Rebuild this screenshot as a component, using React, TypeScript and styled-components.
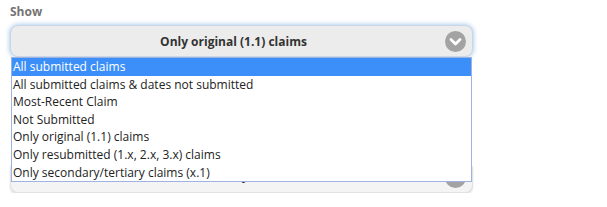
import React from "react";
import styled, { createGlobalStyle } from "styled-components";

const GlobalStyle = createGlobalStyle`
    html, body {
        margin: 0;
        padding: 0;
        background: #ffffff;
        font-family: "Open Sans", "Liberation Sans", sans-serif;
    }
`;

const options = [
    "All submitted claims",
    "All submitted claims & dates not submitted",
    "Most-Recent Claim",
    "Not Submitted",
    "Only original (1.1) claims",
    "Only resubmitted (1.x, 2.x, 3.x) claims",
    "Only secondary/tertiary claims (x.1)",
];

function Chevron() {
    return (
        <svg width="21" height="21" viewBox="0 0 21 21">
            <circle cx="10.5" cy="10.5" r="10.5" fill="#a3a3a3" />
            <path d="M6 8.6 L10.5 13 L15 8.6" fill="none" stroke="#ffffff" strokeWidth="2.8" strokeLinecap="round" strokeLinejoin="round" />
        </svg>
    );
}

export default function App() {
    return (
        <>
            <GlobalStyle />
            <Page>
                <Form>
                    <Field>
                        <Label>Show</Label>
                        <SelectWrap>
                            <SelectButton $focused>
                                <SelectText>Only original (1.1) claims</SelectText>
                                <Icon>
                                    <Chevron />
                                </Icon>
                            </SelectButton>
                            <Listbox>
                                {options.map((o, i) => (
                                    <Option key={o} $active={i === 0}>
                                        {o}
                                    </Option>
                                ))}
                            </Listbox>
                        </SelectWrap>
                    </Field>
                    <Field $spaced>
                        <SelectWrap>
                            <SelectButton>
                                <SelectText $raised>Daily</SelectText>
                                <Icon>
                                    <Chevron />
                                </Icon>
                            </SelectButton>
                        </SelectWrap>
                    </Field>
                </Form>
            </Page>
        </>
    );
}

const Page = styled.div`
    padding: 4px 0 0 10px;
`;

const Form = styled.div`
    width: 463px;
    display: flex;
    flex-direction: column;
`;

const Field = styled.div<{ $spaced?: boolean }>`
    display: flex;
    flex-direction: column;
    margin-top: ${(p) => (p.$spaced ? "104px" : "0")};
`;

const Label = styled.label`
    font-size: 12px;
    line-height: 16px;
    font-weight: 700;
    color: #747474;
    margin-bottom: 5px;
`;

const SelectWrap = styled.div`
    position: relative;
`;

const SelectButton = styled.div<{ $focused?: boolean }>`
    box-sizing: border-box;
    height: 32px;
    display: flex;
    align-items: center;
    justify-content: center;
    padding-right: 16px;
    position: relative;
    background: ${(p) => (p.$focused ? "#ececec" : "#f4f4f4")};
    border: 1px solid ${(p) => (p.$focused ? "#c9d6e6" : "#e2e2e2")};
    border-radius: 8px;
    box-shadow: ${(p) =>
        p.$focused
            ? "0 0 4px 1px rgba(120, 170, 225, 0.55)"
            : "0 2px 2px rgba(0, 0, 0, 0.12)"};
`;

const SelectText = styled.span<{ $raised?: boolean }>`
    font-size: 12px;
    font-weight: 700;
    color: #333333;
    margin-bottom: ${(p) => (p.$raised ? "3px" : "0")};
`;

const Icon = styled.span`
    position: absolute;
    right: 6px;
    top: 5px;
    display: flex;
`;

const Listbox = styled.ul`
    position: absolute;
    z-index: 10;
    left: 1px;
    top: 32px;
    width: 461px;
    box-sizing: border-box;
    margin: 0;
    padding: 0;
    list-style: none;
    background: #ffffff;
    border: 1px solid #9fb3e3;
`;

const Option = styled.li<{ $active?: boolean }>`
    font-size: 12px;
    line-height: 17.6px;
    padding-left: 1px;
    color: ${(p) => (p.$active ? "#ffffff" : "#222222")};
    background: ${(p) => (p.$active ? "#3c8ff8" : "transparent")};
`;
